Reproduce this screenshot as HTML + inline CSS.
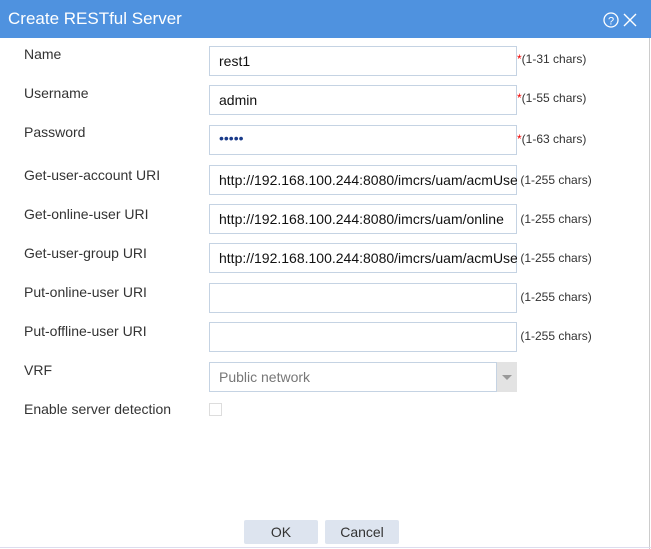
<!DOCTYPE html>
<html><head><style>
body{margin:0;width:651px;height:549px;background:#fff;font-family:"Liberation Sans",Arial,sans-serif;position:relative;overflow:hidden}
.hdr{position:absolute;left:0;top:0;width:651px;height:38px;background:#4f92df;color:#fff;font-size:17px}
.hdr span{position:absolute;left:8px;top:9px}
.lbl{position:absolute;left:24px;font-size:14px;color:#333}
.in{position:absolute;left:209px;width:306px;height:28px;border:1px solid #c5d3e3;background:#fff;font-size:14px;color:#111;box-sizing:content-box}
.in span{position:absolute;left:9px;top:6px;white-space:nowrap;overflow:hidden;width:298px}
.hint{position:absolute;left:517px;font-size:12px;color:#333}
.hint b{color:#e00;font-weight:normal}
.btn{position:absolute;top:520px;width:74px;height:24px;background:#dde4ef;font-size:14px;color:#333;text-align:center;line-height:24px;border-radius:2px}
</style></head><body>
<div class="hdr"><span>Create RESTful Server</span>
<svg style="position:absolute;left:603px;top:12px" width="36" height="16" viewBox="0 0 36 16"><circle cx="8" cy="8" r="7" fill="none" stroke="#fff" stroke-width="1.3"/><text x="8" y="12.5" font-size="11" fill="#fff" text-anchor="middle" font-family="Liberation Sans">?</text><path d="M21 2L33 14M33 2L21 14" stroke="#fff" stroke-width="1.4"/></svg></div>
<div style="position:absolute;left:649px;top:38px;width:1px;height:511px;background:#ccc"></div>
<div style="position:absolute;left:0;top:547px;width:651px;height:1px;background:#dde"></div>

<div class="lbl" style="top:46px">Name</div>
<div class="in" style="top:46px"><span>rest1</span></div>
<div class="hint" style="top:52px"><b>*</b>(1-31 chars)</div>

<div class="lbl" style="top:85px">Username</div>
<div class="in" style="top:85px"><span>admin</span></div>
<div class="hint" style="top:91px"><b>*</b>(1-55 chars)</div>

<div class="lbl" style="top:124px">Password</div>
<div class="in" style="top:125px"><span style="color:#1a3b8a;top:4px">•••••</span></div>
<div class="hint" style="top:132px"><b>*</b>(1-63 chars)</div>

<div class="lbl" style="top:167px">Get-user-account URI</div>
<div class="in" style="top:165px"><span>http://192.168.100.244:8080/imcrs/uam/acmUserGroup</span></div>
<div class="hint" style="top:173px">&nbsp;(1-255 chars)</div>

<div class="lbl" style="top:206px">Get-online-user URI</div>
<div class="in" style="top:204px"><span>http://192.168.100.244:8080/imcrs/uam/online</span></div>
<div class="hint" style="top:212px">&nbsp;(1-255 chars)</div>

<div class="lbl" style="top:245px">Get-user-group URI</div>
<div class="in" style="top:243px"><span>http://192.168.100.244:8080/imcrs/uam/acmUserGroup</span></div>
<div class="hint" style="top:251px">&nbsp;(1-255 chars)</div>

<div class="lbl" style="top:284px">Put-online-user URI</div>
<div class="in" style="top:283px"></div>
<div class="hint" style="top:290px">&nbsp;(1-255 chars)</div>

<div class="lbl" style="top:323px">Put-offline-user URI</div>
<div class="in" style="top:322px"></div>
<div class="hint" style="top:329px">&nbsp;(1-255 chars)</div>

<div class="lbl" style="top:362px">VRF</div>
<div class="in" style="top:362px;width:286px"><span style="color:#777">Public network</span></div>
<div style="position:absolute;left:497px;top:362px;width:20px;height:30px;background:#e3e3e3"><div style="position:absolute;left:5px;top:13px;border-left:5px solid transparent;border-right:5px solid transparent;border-top:5px solid #999"></div></div>

<div class="lbl" style="top:401px">Enable server detection</div>
<div style="position:absolute;left:209px;top:403px;width:11px;height:11px;border:1px solid #ddd"></div>

<div class="btn" style="left:244px">OK</div>
<div class="btn" style="left:325px">Cancel</div>
</body></html>
